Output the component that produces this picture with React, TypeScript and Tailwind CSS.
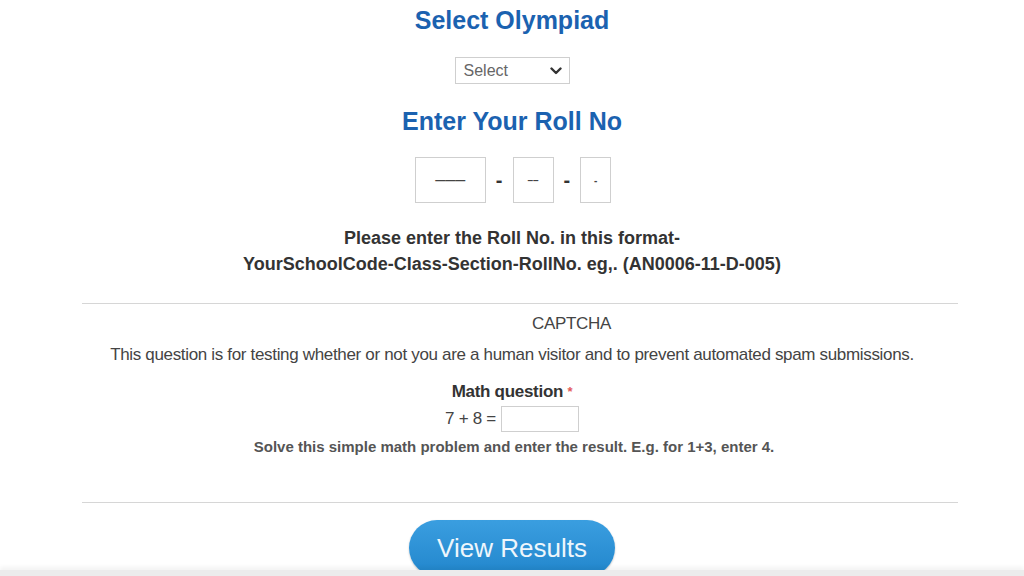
import { useState } from 'react'

const sans = { fontFamily: '"Liberation Sans", Arial, sans-serif' }

function Chevron() {
  return (
    <svg width="12" height="8" viewBox="0 0 12 8" className="text-[#333]">
      <path d="M1.5 1.5 L6 6 L10.5 1.5" fill="none" stroke="currentColor" strokeWidth="2.4" strokeLinecap="round" strokeLinejoin="round" />
    </svg>
  )
}

function RollBox({ w, ph }: { w: string; ph: string }) {
  return (
    <input
      className={`${w} h-[46px] border border-[#cfcfcf] bg-white text-center text-[10px] font-bold text-[#333] outline-none placeholder:text-[#444]`}
      placeholder={ph}
    />
  )
}

export default function App() {
  const [answer, setAnswer] = useState('')
  return (
    <div className="h-[576px] w-full overflow-hidden bg-white flex flex-col" style={sans}>
      <div className="flex-1 overflow-hidden">
        <div className="mx-auto w-[892px] flex flex-col items-center pt-[6px]">
          <h2 className="text-[25px] leading-[28px] font-bold text-[#1b62b0]">Select Olympiad</h2>

          <div className="mt-[23px] w-[115px] h-[27px] border border-[#cfcfcf] flex items-center justify-between pl-[8px] pr-[7px]">
            <span className="text-[16px] text-[#666]">Select</span>
            <Chevron />
          </div>

          <h2 className="mt-[23px] text-[25px] leading-[28px] font-bold text-[#1b62b0]">Enter Your Roll No</h2>

          <div className="mt-[22px] ml-[2px] flex items-center">
            <RollBox w="w-[71px]" ph="———" />
            <span className="mx-[10px] text-[20px] font-bold text-[#333]">-</span>
            <RollBox w="w-[41px]" ph="––" />
            <span className="mx-[10px] text-[20px] font-bold text-[#333]">-</span>
            <RollBox w="w-[31px]" ph="-" />
          </div>

          <p className="mt-[22px] text-center text-[18px] leading-[26px] font-bold text-[#333]">
            Please enter the Roll No. in this format-
            <br />
            YourSchoolCode-Class-Section-RollNo. eg,. (AN0006-11-D-005)
          </p>

          <div className="mt-[26px] self-end w-[876px] border-t border-[#d6d6d6]" />

          <div className="flex flex-col items-center text-[#444]">
            <p className="mt-[10px] ml-[119px] text-[17px] leading-[20px] tracking-[-0.3px]">CAPTCHA</p>
            <p className="mt-[11px] text-[17px] leading-[20px] tracking-[-0.33px]">
              This question is for testing whether or not you are a human visitor and to prevent automated spam submissions.
            </p>
            <p className="mt-[17px] text-[17px] leading-[20px] tracking-[-0.3px] font-bold text-[#333]">
              Math question <span className="text-[#e35a5a] text-[13px] align-top">*</span>
            </p>
            <div className="mt-[4px] flex items-center gap-[5px]">
              <span className="text-[17px] tracking-[-0.3px] text-[#444]">7 + 8 =</span>
              <input
                value={answer}
                onChange={(e) => setAnswer(e.target.value)}
                className="w-[78px] h-[26px] border border-[#cfcfcf] bg-white outline-none px-1 text-[14px]"
              />
            </div>
            <p className="mt-[6px] ml-[4px] text-[15px] leading-[18px] font-bold text-[#555]">
              Solve this simple math problem and enter the result. E.g. for 1+3, enter 4.
            </p>
          </div>

          <div className="mt-[46px] self-end w-[876px] border-t border-[#d6d6d6]" />

          <button className="mt-[17px] w-[206px] h-[56px] rounded-full bg-gradient-to-b from-[#3a9ee0] to-[#2186cc] text-[#eef6fc] text-[26px] shadow-[0_1px_2px_rgba(0,0,0,0.25)]">
            View Results
          </button>
        </div>
      </div>
      <div className="h-[6px] bg-[#ececec] shadow-[0_-3px_4px_rgba(0,0,0,0.05)]" />
    </div>
  )
}
